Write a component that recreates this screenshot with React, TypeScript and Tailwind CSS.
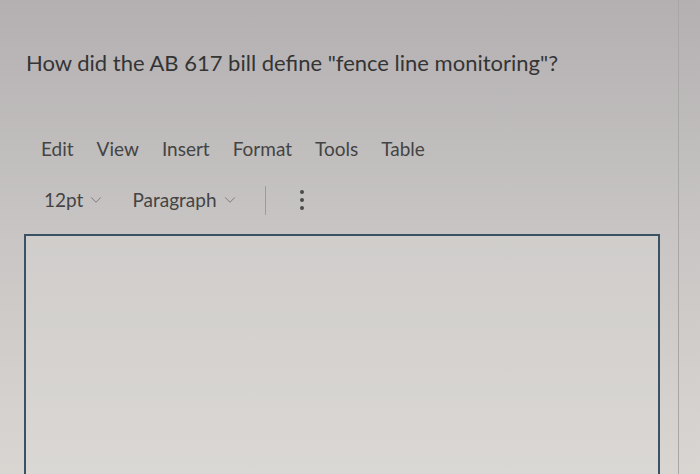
import React from 'react';
import { ChevronDown } from 'lucide-react';

const menus = ['Edit', 'View', 'Insert', 'Format', 'Tools', 'Table'];

export default function App() {
  return (
    <div
      className="relative w-[700px] h-[474px] overflow-hidden bg-gradient-to-b from-[#b4b0b2] via-[#c8c5c4] to-[#d9d6d2] text-[#373737]"
      style={{ fontFamily: 'Lato, "Open Sans", sans-serif' }}
    >
      {/* right edge of the page frame */}
      <div className="absolute top-0 bottom-0 left-[678px] w-px bg-[#a9a7a6]" />

      <div className="pl-[26px] pt-[49px]">
        <h1 className="text-[22px] leading-[28px] text-[#343434]">
          How did the AB 617 bill define "fence line monitoring"?
        </h1>
      </div>

      {/* Menu bar */}
      <div className="flex items-center gap-[23px] pl-[41px] mt-[59px] text-[19px] leading-[26px] text-[#444]">
        {menus.map((m) => (
          <span key={m}>{m}</span>
        ))}
      </div>

      {/* Toolbar */}
      <div className="flex items-center pl-[44px] mt-[24px] h-[28px] text-[19px] text-[#444]">
        <span>12pt</span>
        <ChevronDown size={18} strokeWidth={1.3} className="ml-[4px] text-[#7a7a7a]" />
        <span className="ml-[27px]">Paragraph</span>
        <ChevronDown size={18} strokeWidth={1.3} className="ml-[4px] text-[#7a7a7a]" />
        <div className="ml-[26px] w-px h-[29px] bg-[#9c9c9c]" />
        <div className="ml-[34px] flex flex-col gap-[4px]">
          <span className="w-[4px] h-[4px] rounded-full bg-[#4a4a4a]" />
          <span className="w-[4px] h-[4px] rounded-full bg-[#4a4a4a]" />
          <span className="w-[4px] h-[4px] rounded-full bg-[#4a4a4a]" />
        </div>
      </div>

      {/* Editor area */}
      <div className="ml-[24px] mt-[20px] w-[636px] h-[260px] border-2 border-[#3b5264] bg-[#dcd9d6]/40" />
    </div>
  );
}
